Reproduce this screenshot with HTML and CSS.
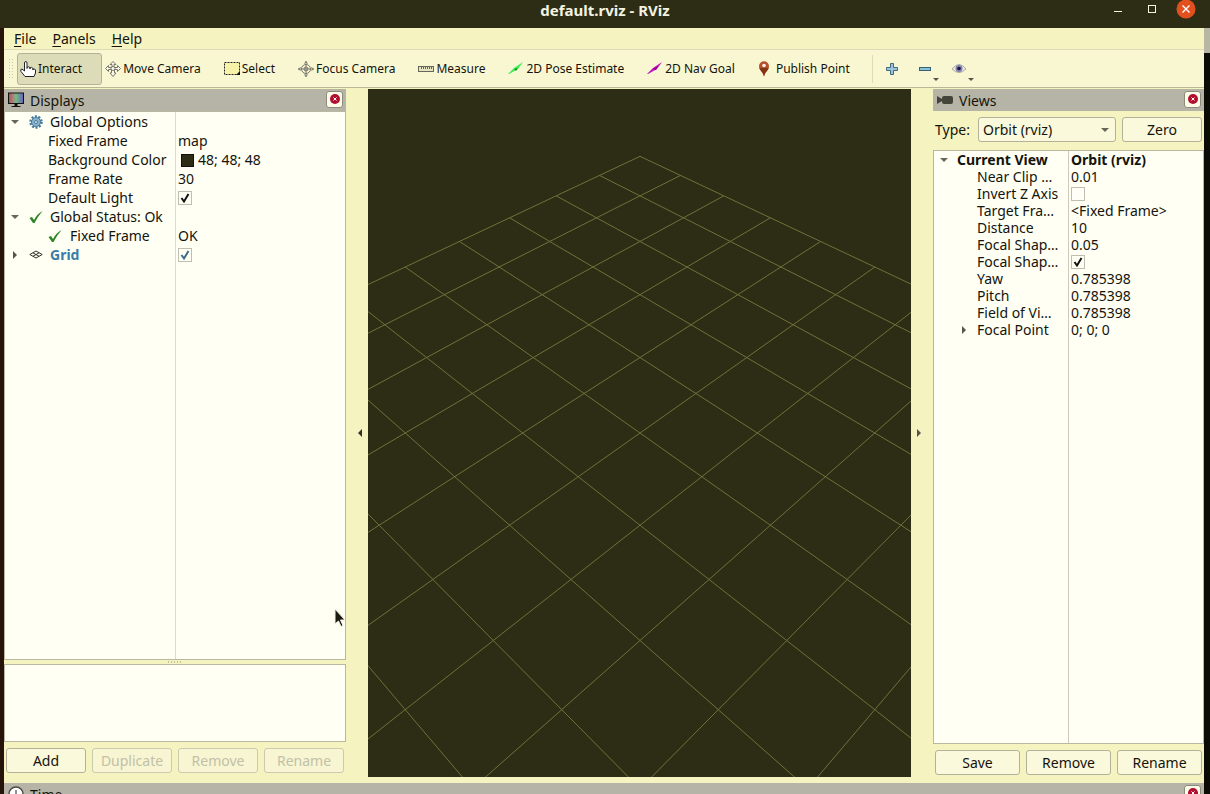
FILE: index.html
```html
<!DOCTYPE html>
<html lang="en">
    <head>
        <meta charset="utf-8">
        <title>default.rviz - RViz</title>
        <link rel="stylesheet" href="styles.css">
        <script src="grid.js" defer></script>
    </head>
    <body>
        <div class="titlebar">
            <h1>default.rviz - RViz</h1>
            <div class="win-buttons">
                <button aria-label="Minimize"><svg width="10" height="20"><path d="M1 11.5h8" stroke="#f4f2e0"/></svg></button>
                <button aria-label="Maximize"><svg width="10" height="20"><rect x="1.5" y="5.5" width="7" height="7" fill="none" stroke="#f4f2e0"/></svg></button>
                <button aria-label="Close"><svg width="20" height="20"><circle cx="10" cy="9" r="9.5" fill="#e2501f"/><path d="M6.5 5.5l7 7M13.5 5.5l-7 7" stroke="#fff" stroke-width="1.4"/></svg></button>
            </div>
        </div>

        <div class="window">
            <nav class="menubar">
                <button><u>F</u>ile</button>
                <button><u>P</u>anels</button>
                <button><u>H</u>elp</button>
            </nav>

            <div class="toolbar">
                <span class="handle"></span>
                <button class="tool active">
                    <svg width="16" height="16" viewBox="0 0 16 16"><path d="M4.500 10V2Q4.500.5 5.750.5T7 2v5.500V6.500Q8.500 5 10 6.500V8 7Q11.500 5.500 13 7.500V9 8q2-.5 2.500 1v3L14 15.500H5L1 10.500Q0 8 2 8z" fill="#fff" stroke="#222"/></svg>
                    Interact
                </button>
                <button class="tool">
                    <svg width="16" height="16" viewBox="0 0 16 16"><g fill="#fbfae8" stroke="#77776c"><path d="M8 .5l3 3H9v3h3.500V4.500L15.500 7.500l-3 3v-2H9.500V12H11l-3 3.500L5 12h1.500V8.500h-3v2l-3-3 3-3v2H7v-3H5z"/><circle cx="8" cy="7.500" r="2"/></g></svg>
                    Move Camera
                </button>
                <button class="tool">
                    <svg width="16" height="16" viewBox="0 0 16 16"><rect x=".5" y="1.500" width="15" height="12" fill="#f6f2a8" stroke="#222" stroke-dasharray="2 1"/><path d="M16 10v4h-4z" fill="#111"/></svg>
                    Select
                </button>
                <button class="tool">
                    <svg width="16" height="16" viewBox="0 0 16 16"><g fill="none" stroke="#77776c"><circle cx="8" cy="8" r="4.500"/><circle cx="8" cy="8" r="2"/><path d="M8 0v16M0 8h16M6.500 2.500L8 .5l1.500 2M6.500 13.500l1.500 2 1.500-2M2.500 6.500l-2 1.500 2 1.500M13.500 6.500l2 1.500-2 1.500"/></g></svg>
                    Focus Camera
                </button>
                <button class="tool">
                    <svg width="16" height="16" viewBox="0 0 16 16"><rect x=".5" y="5.500" width="15" height="5" fill="#e6e4c0" stroke="#66665c"/><path d="M3.500 6v2M5.500 6v2M7.500 6v2M9.500 6v2M11.500 6v2M13.500 6v2" stroke="#66665c"/></svg>
                    Measure
                </button>
                <button class="tool">
                    <svg width="16" height="16" viewBox="0 0 16 16"><path d="M0 13L6 7l9-6-5 7-9 5z" fill="#3af055"/><path d="M6 8l4-1-2 3z" fill="#128a2c"/></svg>
                    2D Pose Estimate
                </button>
                <button class="tool">
                    <svg width="16" height="16" viewBox="0 0 16 16"><path d="M0 13L6 7l9-6-5 7-9 5z" fill="#c40fc0"/><path d="M6 8l5-3-2 4z" fill="#850485"/></svg>
                    2D Nav Goal
                </button>
                <button class="tool">
                    <svg width="16" height="16" viewBox="0 0 16 16"><path d="M6 15.500C5 11 1 9 1 5.200a5 5 0 0 1 10 0C11 9 7 11 6 15.500z" fill="#b5502c"/><path d="M6 15.500C5 11 2 9 1.200 7h9.600C10 9 7 11 6 15.500z" fill="#833414"/><circle cx="6" cy="4.500" r="1.800" fill="#fff0e8"/></svg>
                    Publish Point
                </button>
                <span class="separator"></span>
                <button class="mini" aria-label="Add tool"><svg width="14" height="14"><path d="M5.500 1.500h3v4h4v3h-4v4h-3v-4h-4v-3h4z" fill="#9cc4dc" stroke="#41687e"/></svg></button>
                <button class="mini menu" aria-label="Remove tool"><svg width="14" height="14"><rect x="1.500" y="5.500" width="11" height="3" fill="#8cc0d4" stroke="#356376"/></svg></button>
                <button class="mini menu" aria-label="Tool options"><svg width="16" height="14"><path d="M1 7q7-9 14 0-7 7-14 0z" fill="#ecebe4" stroke="#aaa99c"/><circle cx="8" cy="6.500" r="3.500" fill="#8080b4"/><circle cx="8" cy="6.500" r="1.800" fill="#1c1c30"/></svg></button>
            </div>

            <main>
                <section class="dock displays">
                    <header>
                        <svg width="16" height="16" viewBox="0 0 16 16"><defs><linearGradient id="screen"><stop offset="0" stop-color="#a85050"/><stop offset=".25" stop-color="#b07878"/><stop offset=".5" stop-color="#70bb80"/><stop offset="1" stop-color="#6a5fc0"/></linearGradient></defs><rect x=".5" y="1" width="15" height="10.500" fill="url(#screen)" stroke="#111"/><path d="M8 12v2" stroke="#111" stroke-width="3"/><path d="M3.500 14.500h9" stroke="#111"/></svg>
                        <h2>Displays</h2>
                        <button class="close" aria-label="Close Displays"><svg width="10" height="10"><circle cx="5" cy="5" r="5" fill="#b30d30"/><path d="M3.500 3.500l3 3M6.500 3.500l-3 3" stroke="#fff"/></svg></button>
                    </header>
                    <div class="tree">
                        <table>
                            <tr><td><i class="down"></i><svg class="icon" width="14" height="14" viewBox="0 0 14 14"><circle cx="7" cy="7" r="5.500" fill="none" stroke="#47799a" stroke-width="2.500" stroke-dasharray="2 1.450"/><circle cx="7" cy="7" r="4.500" fill="#87b3d0" stroke="#47799a"/><circle cx="7" cy="7" r="1.500" fill="#e9eed0" stroke="#47799a"/></svg>Global Options</td><td></td></tr>
                            <tr><td class="sub">Fixed Frame</td><td>map</td></tr>
                            <tr><td class="sub">Background Color</td><td><b class="swatch"></b>48; 48; 48</td></tr>
                            <tr><td class="sub">Frame Rate</td><td>30</td></tr>
                            <tr><td class="sub"><label for="light">Default Light</label></td><td><input type="checkbox" id="light" checked></td></tr>
                            <tr><td><i class="down"></i><svg class="icon" width="14" height="14" viewBox="0 0 14 14"><path d="M.5 8L3 7l2 3Q8 4 13.500 1 8.500 7 5.500 13H4z" fill="#2f8426"/></svg>Global Status: Ok</td><td></td></tr>
                            <tr><td class="sub"><svg class="icon" width="14" height="14" viewBox="0 0 14 14"><path d="M.5 8L3 7l2 3Q8 4 13.500 1 8.500 7 5.500 13H4z" fill="#2f8426"/></svg>Fixed Frame</td><td>OK</td></tr>
                            <tr><td><i class="right"></i><svg class="icon" width="14" height="14" viewBox="0 0 14 14"><path d="M.8 6.500L7 3l6.200 3.500L7 10zM3.900 4.800l6.200 3.500M10.100 4.800L3.900 8.300" fill="none" stroke="#33332c"/></svg><label for="grid-on" class="display-name">Grid</label></td><td><input type="checkbox" id="grid-on" class="blue" checked></td></tr>
                        </table>
                    </div>
                    <span class="grip"></span>
                    <textarea class="info" aria-label="Description" readonly></textarea>
                    <div class="buttons">
                        <button>Add</button>
                        <button disabled>Duplicate</button>
                        <button disabled>Remove</button>
                        <button disabled>Rename</button>
                    </div>
                </section>

                <button class="collapse before" aria-label="Hide left panels"><i class="left"></i></button>
                <svg id="view" viewBox="-272 -344 543 688" preserveAspectRatio="xMidYMid slice"></svg>
                <button class="collapse after" aria-label="Hide right panels"><i class="right"></i></button>

                <section class="dock views">
                    <header>
                        <svg width="16" height="16" viewBox="0 0 16 16"><path d="M0 4l5 3v2l-5 3z" fill="#44443a"/><rect x="5" y="4" width="11" height="8" rx="2" fill="#44443a"/></svg>
                        <h2>Views</h2>
                        <button class="close" aria-label="Close Views"><svg width="10" height="10"><circle cx="5" cy="5" r="5" fill="#b30d30"/><path d="M3.500 3.500l3 3M6.500 3.500l-3 3" stroke="#fff"/></svg></button>
                    </header>
                    <div class="type-row">
                        <label for="type">Type:</label>
                        <select id="type"><option>Orbit (rviz)</option></select>
                        <button>Zero</button>
                    </div>
                    <div class="tree">
                        <table>
                            <tr class="current"><td><i class="down"></i>Current View</td><td>Orbit (rviz)</td></tr>
                            <tr><td class="sub">Near Clip …</td><td>0.01</td></tr>
                            <tr><td class="sub"><label for="invert">Invert Z Axis</label></td><td><input type="checkbox" id="invert"></td></tr>
                            <tr><td class="sub">Target Fra…</td><td>&lt;Fixed Frame&gt;</td></tr>
                            <tr><td class="sub">Distance</td><td>10</td></tr>
                            <tr><td class="sub">Focal Shap…</td><td>0.05</td></tr>
                            <tr><td class="sub"><label for="focal">Focal Shap…</label></td><td><input type="checkbox" id="focal" checked></td></tr>
                            <tr><td class="sub">Yaw</td><td>0.785398</td></tr>
                            <tr><td class="sub">Pitch</td><td>0.785398</td></tr>
                            <tr><td class="sub">Field of Vi…</td><td>0.785398</td></tr>
                            <tr><td class="sub opens"><i class="right"></i>Focal Point</td><td>0; 0; 0</td></tr>
                        </table>
                    </div>
                    <div class="buttons">
                        <button>Save</button>
                        <button>Remove</button>
                        <button>Rename</button>
                    </div>
                </section>
            </main>

            <section class="dock time">
                <header>
                    <svg width="16" height="16" viewBox="0 0 16 16"><circle cx="8" cy="8" r="7" fill="#fff" stroke="#4c4c40" stroke-width="1.500"/><path d="M8 4v4.500h3" fill="none" stroke="#222"/></svg>
                    <h2>Time</h2>
                    <button class="close" aria-label="Close Time"><svg width="10" height="10"><circle cx="5" cy="5" r="5" fill="#b30d30"/><path d="M3.500 3.500l3 3M6.500 3.500l-3 3" stroke="#fff"/></svg></button>
                </header>
            </section>
        </div>
        <div class="desktop-edge"></div>

        <svg class="pointer" width="12" height="20"><path d="M1 1v15l3.500-3L7 18.500l2-1-2.500-5.500H11z" fill="#1c1c14" stroke="#f4f2e0"/></svg>
    </body>
</html>
```
FILE: styles.css
```css
* {
    box-sizing: border-box;
}
body {
    margin: 0;
    height: 100vh;
    overflow: hidden;
    display: grid;
    grid-template: 28px 1fr / 1fr 6px;
    padding-left: 4px;
    background: #26140a;
    color: #14140c;
    font: 14px/18px "Noto Sans", "Open Sans", sans-serif;
}
button, select, input, textarea {
    font: inherit;
    color: inherit;
    margin: 0;
    padding: 0;
    border: 0;
    background: none;
}
h1, h2 {
    margin: 0;
    font-size: 15px;
}
h2 {
    padding-top: 2px;
    font-size: 14px;
    font-weight: normal;
}

/* title bar */
.titlebar {
    grid-column: 1 / 3;
    display: grid;
    grid-template-columns: 1fr auto 1fr;
    align-items: start;
    margin-left: -4px;
    padding-right: 14px;
    padding-left: 14px;
    background: #2d2d16;
    color: #f4f2e0;
}
.titlebar h1 {
    grid-column: 2;
    line-height: 20px;
}
.win-buttons {
    display: flex;
    justify-content: flex-end;
    gap: 24px;
}
.win-buttons button:last-child {
    margin-left: -5px;
}
.win-buttons svg {
    display: block;
}

.window {
    min-width: 0;
    min-height: 0;
    display: flex;
    flex-direction: column;
    overflow: hidden;
    background: #f5f3c0;
}
.desktop-edge {
    background: linear-gradient(#b8b7a4 25px, #0c0c06 25px);
}

/* menu and toolbar */
.menubar {
    display: flex;
    gap: 16px;
    height: 22px;
    padding-left: 10px;
    border-bottom: 1px solid #dcdab8;
}
.menubar u {
    text-underline-offset: 2px;
}
.toolbar {
    display: flex;
    align-items: center;
    height: 38px;
    padding: 1px 4px 0;
    border-bottom: 1px solid #b9b798;
    background: #f9f7d2;
    font-size: 12px;
}
.handle {
    width: 6px;
    height: 22px;
    margin-right: 3px;
    background: radial-gradient(#c9c7a8 1px, transparent 1px) 0 0 / 3px 3px;
}
.tool {
    display: flex;
    align-items: center;
    gap: 2px;
    height: 32px;
    padding: 0 19px 0 2px;
    border: 1px solid transparent;
    border-radius: 3px;
    white-space: nowrap;
}
.tool.active {
    background: #dddcb8;
    border-color: #b3b19a;
}
.separator {
    height: 28px;
    margin: 0 12px 0 2px;
    border-left: 1px solid #dcdab8;
}
.mini {
    position: relative;
    margin-right: 19px;
}
.mini svg {
    display: block;
}
.menu::after {
    content: "";
    position: absolute;
    right: -7px;
    bottom: -5px;
    border: 3px solid transparent;
    border-top-color: #55554a;
    border-bottom: 0;
}

/* panels */
main {
    flex: 1;
    min-height: 0;
    display: flex;
    padding-top: 1px;
}
.dock {
    display: flex;
    flex-direction: column;
}
.displays {
    width: 342px;
}
.views {
    width: 271px;
}
.dock header {
    flex: none;
    display: flex;
    align-items: center;
    gap: 6px;
    height: 22px;
    padding: 0 3px 0 4px;
    background: #b5b4a6;
}
.close {
    display: grid;
    place-items: center;
    width: 17px;
    height: 17px;
    margin: 0 0 2px auto;
    border: 1px solid #8c8b7c;
    border-radius: 3px;
    background: #fdfce8;
}
.tree {
    flex: 1;
    border: 1px solid #b9b7a0;
    background: linear-gradient(to right, transparent 170px, #dddccc 170px, #dddccc 171px, transparent 171px) #fffff4;
}
.views .tree {
    background: linear-gradient(to right, transparent 134px, #cccbbb 134px, #cccbbb 135px, transparent 135px) #fffff4;
}
table {
    width: 100%;
    table-layout: fixed;
    border-collapse: collapse;
}
tr {
    height: 19px;
}
.views tr {
    height: 17px;
}
td {
    padding: 0 0 0 2px;
    line-height: 17px;
    white-space: nowrap;
}
td:first-child {
    width: 171px;
    padding-left: 6px;
}
td.sub:first-child {
    padding-left: 43px;
}
.views td:first-child {
    width: 135px;
}
.views td.opens:first-child {
    padding-left: 26px;
}
.current {
    font-weight: bold;
}
.icon {
    margin-right: 7px;
    vertical-align: -2px;
}
.sub .icon {
    margin-right: 8px;
}
.display-name {
    color: #3c7ba6;
    font-weight: bold;
}
.swatch {
    display: inline-block;
    width: 13px;
    height: 13px;
    margin: 0 4px 0 3px;
    border: 1px solid #111;
    background: #2d2d16;
    vertical-align: -2px;
}
input[type=checkbox] {
    appearance: none;
    display: block;
    width: 14px;
    height: 14px;
    border: 1px solid #bfbeb0;
    background: #fffff8;
}
input:checked {
    background: url("data:image/svg+xml,%3Csvg xmlns='http://www.w3.org/2000/svg' viewBox='0 0 12 12'%3E%3Cpath d='M2.500 6l2.500 3.500L9.500 2' fill='none' stroke='%23111' stroke-width='2'/%3E%3C/svg%3E");
}
input.blue:checked {
    background: url("data:image/svg+xml,%3Csvg xmlns='http://www.w3.org/2000/svg' viewBox='0 0 12 12'%3E%3Cpath d='M2.500 6l2.500 3.500L9.500 2' fill='none' stroke='%233c6a86' stroke-width='2'/%3E%3C/svg%3E");
}

/* small arrows */
i {
    display: inline-block;
    border: 4px solid transparent;
}
i.down {
    margin-right: 10px;
    border-top-color: #66665a;
    border-bottom: 0;
    vertical-align: 3px;
}
i.right {
    border-left-color: #55554a;
    border-right: 0;
}
td i.right {
    margin: 0 12px 0 2px;
    vertical-align: 1px;
}
td.opens i.right {
    margin-right: 11px;
}
.views i.down {
    margin-right: 9px;
}
i.left {
    border-right-color: #33332a;
    border-left: 0;
}

.grip {
    flex: none;
    align-self: center;
    width: 16px;
    height: 4px;
    background: radial-gradient(#c0be9e 1px, transparent 1px) 0 0 / 3px 4px;
}
.info {
    height: 78px;
    border: 1px solid #b9b7a0;
    background: #fffff4;
    resize: none;
}
.buttons {
    display: flex;
    gap: 6px;
    padding: 6px 2px 10px;
}
.views .buttons {
    padding-bottom: 8px;
}
.buttons button, .type-row button, select {
    flex: 1;
    min-width: 0;
    height: 25px;
    border: 1px solid #b3b19a;
    border-radius: 3px;
    background: #fbf9dc;
}
.buttons button:disabled {
    border-color: #cccab0;
    background: #f7f5d2;
    color: #c2c1a8;
}
.type-row {
    display: flex;
    align-items: center;
    padding: 6px 2px 8px;
}
.type-row label {
    width: 43px;
}
.type-row select {
    flex: 0 1 138px;
    margin-right: 6px;
    padding: 0 4px;
    appearance: none;
    background: url("data:image/svg+xml,%3Csvg xmlns='http://www.w3.org/2000/svg' width='8' height='4'%3E%3Cpath d='M0 0h8L4 4z' fill='%2366665a'/%3E%3C/svg%3E") right 6px center no-repeat #fbf9dc;
}

/* 3D view */
#view {
    flex: 1;
    min-width: 0;
    margin-bottom: 6px;
    background: #2d2d16;
}
#view line {
    stroke: #72703a;
    stroke-width: 1;
}
.collapse {
    width: 22px;
    display: flex;
    align-items: center;
    margin-bottom: 6px;
}
.before {
    padding-left: 12px;
}
.after {
    padding-left: 6px;
}
.time {
    flex: none;
    margin-bottom: -11px;
}
.pointer {
    position: absolute;
    left: 334px;
    top: 608px;
}
```
FILE: grid.js
```js
// 10 x 10 grid seen by the orbit camera (distance 10, yaw and pitch 45 degrees)
const view = document.getElementById("view");
const focal = 830;

const project = (x, y) => {
    const depth = 10 - (x + y) / 2;
    return [focal * (x - y) * Math.SQRT1_2 / depth, focal * (x + y) / 2 / depth];
}

const addLine = (a, b) => {
    const line = document.createElementNS("http://www.w3.org/2000/svg", "line");
    line.setAttribute("x1", a[0]);
    line.setAttribute("y1", a[1]);
    line.setAttribute("x2", b[0]);
    line.setAttribute("y2", b[1]);
    view.appendChild(line);
}

for (let i = -5; i <= 5; i++) {
    addLine(project(i, -5), project(i, 5));
    addLine(project(-5, i), project(5, i));
}
```
